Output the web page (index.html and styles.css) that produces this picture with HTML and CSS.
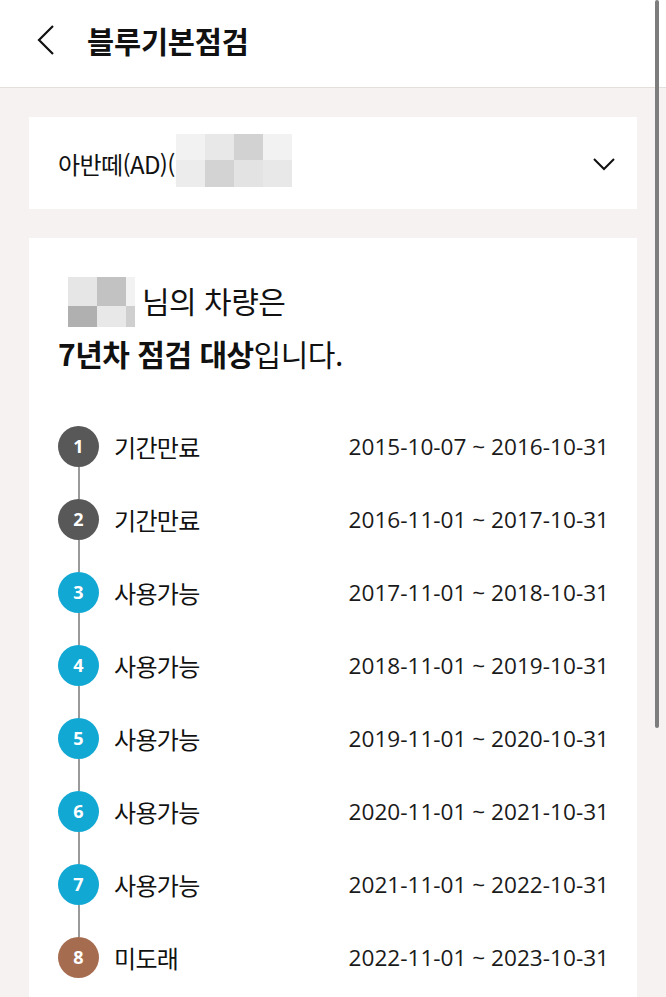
FILE: index.html
```html
<!DOCTYPE html>
<html lang="ko">
<head>
<meta charset="utf-8">
<title>블루기본점검</title>
<link rel="stylesheet" href="styles.css">
</head>
<body>
<header class="topbar">
  <button class="back" aria-label="뒤로">
    <svg width="20" height="32" viewBox="0 0 20 32"><polyline points="16,2 2,16 16,30" fill="none" stroke="#111" stroke-width="2.2"/></svg>
  </button>
  <h1 class="title">블루기본점검</h1>
</header>
<main class="content">
  <section class="card select">
    <div class="select-text">아반떼(AD)(<span class="mosaic m1"><i class="c1"></i><i class="c2"></i><i class="c3"></i><i class="c1"></i><i class="c4"></i><i class="c5"></i><i class="c6"></i><i class="c2"></i></span></div>
    <svg class="chev" width="24" height="14" viewBox="0 0 24 14"><polyline points="2,2 12,12 22,2" fill="none" stroke="#111" stroke-width="2"/></svg>
  </section>
  <section class="card info">
    <p class="intro"><span class="mosaic m2"><i class="d1"></i><i class="d2"></i><i class="d3"></i><i class="d4"></i><i class="d5"></i><i class="d6"></i></span>님의 차량은<br><strong>7년차 점검 대상</strong>입니다.</p>
    <ol class="timeline">
      <li class="step done"><span class="dot">1</span><span class="label">기간만료</span><span class="date">2015-10-07 ~ 2016-10-31</span></li>
      <li class="step done"><span class="dot">2</span><span class="label">기간만료</span><span class="date">2016-11-01 ~ 2017-10-31</span></li>
      <li class="step avail"><span class="dot">3</span><span class="label">사용가능</span><span class="date">2017-11-01 ~ 2018-10-31</span></li>
      <li class="step avail"><span class="dot">4</span><span class="label">사용가능</span><span class="date">2018-11-01 ~ 2019-10-31</span></li>
      <li class="step avail"><span class="dot">5</span><span class="label">사용가능</span><span class="date">2019-11-01 ~ 2020-10-31</span></li>
      <li class="step avail"><span class="dot">6</span><span class="label">사용가능</span><span class="date">2020-11-01 ~ 2021-10-31</span></li>
      <li class="step avail"><span class="dot">7</span><span class="label">사용가능</span><span class="date">2021-11-01 ~ 2022-10-31</span></li>
      <li class="step future"><span class="dot">8</span><span class="label">미도래</span><span class="date">2022-11-01 ~ 2023-10-31</span></li>
    </ol>
  </section>
</main>
<div class="scrollbar"></div>
</body>
</html>
```

FILE: styles.css
```css
* { box-sizing: border-box; }
html, body { margin: 0; padding: 0; }
body {
  background: #f5f2f1;
  font-family: "Noto Sans CJK KR", "Noto Sans", sans-serif;
  color: #111;
}
.topbar {
  height: 88px;
  background: #fff;
  border-bottom: 1px solid #e3dfdd;
  display: flex;
  align-items: center;
  padding-left: 37px;
  padding-bottom: 8px;
}
.back {
  border: 0;
  background: none;
  padding: 0;
  width: 20px;
  height: 32px;
  display: flex;
}
.title {
  margin: 0 0 0 30px;
  font-size: 29.5px;
  font-weight: 700;
  letter-spacing: -0.2px;
}
.content {
  padding: 29px 29px 0 29px;
  display: flex;
  flex-direction: column;
  gap: 29px;
}
.card { background: #fff; }
.select {
  height: 92px;
  display: flex;
  align-items: center;
  justify-content: space-between;
  padding: 0 21px 0 29px;
}
.select-text {
  font-size: 24px;
  display: flex;
  align-items: center;
  letter-spacing: -0.6px;
}
.mosaic { display: inline-grid; vertical-align: middle; }
.mosaic i { display: block; }
.m1 {
  grid-template-columns: repeat(4, 29px);
  grid-template-rows: 26px 27px;
  margin-left: 1px;
  margin-top: -6px;
}
.c1 { background: #f2f2f2; }
.c2 { background: #e8e8e8; }
.c3 { background: #d2d2d2; }
.c4 { background: #ececec; }
.c5 { background: #d3d3d3; }
.c6 { background: #e3e3e3; }
.chev { margin-top: 2px; }
.info { padding: 36px 28px 40px 29px; }
.intro {
  margin: 0;
  font-size: 30px;
  line-height: 52px;
  letter-spacing: -0.5px;
}
.intro strong { font-weight: 700; }
.m2 {
  grid-template-columns: 29px 29px 9px;
  grid-template-rows: 29px 21px;
  margin: -6px 7px 0 10px;
}
.d1 { background: #e6e6e6; }
.d2 { background: #c2c2c2; }
.d3 { background: #f2f2f2; }
.d4 { background: #b0b0b0; }
.d5 { background: #e8e8e8; }
.d6 { background: #cfcfcf; }
.timeline {
  list-style: none;
  margin: 31px 0 0 0;
  padding: 0;
}
.step {
  height: 73px;
  display: flex;
  align-items: center;
  position: relative;
}
.step:not(:last-child)::after {
  content: "";
  position: absolute;
  left: 20px;
  top: 57px;
  width: 2px;
  height: 32px;
  background: #9a9a9a;
}
.dot {
  width: 41px;
  height: 41px;
  border-radius: 50%;
  display: flex;
  align-items: center;
  justify-content: center;
  color: #fff;
  font-family: "Open Sans", "Noto Sans", sans-serif;
  font-weight: 700;
  font-size: 18px;
  flex-shrink: 0;
}
.done .dot { background: #585858; }
.avail .dot { background: #12a8d4; }
.future .dot { background: #a66c50; }
.label {
  margin-left: 15px;
  font-size: 24px;
  letter-spacing: -0.7px;
  flex: 1;
}
.date {
  font-family: "Open Sans", "Noto Sans", sans-serif;
  font-size: 22.6px;
  color: #1a1a1a;
}
.scrollbar {
  position: fixed;
  top: 0;
  left: 655px;
  width: 4px;
  height: 728px;
  border-radius: 2px;
  background: #7d7d7d;
}
```
